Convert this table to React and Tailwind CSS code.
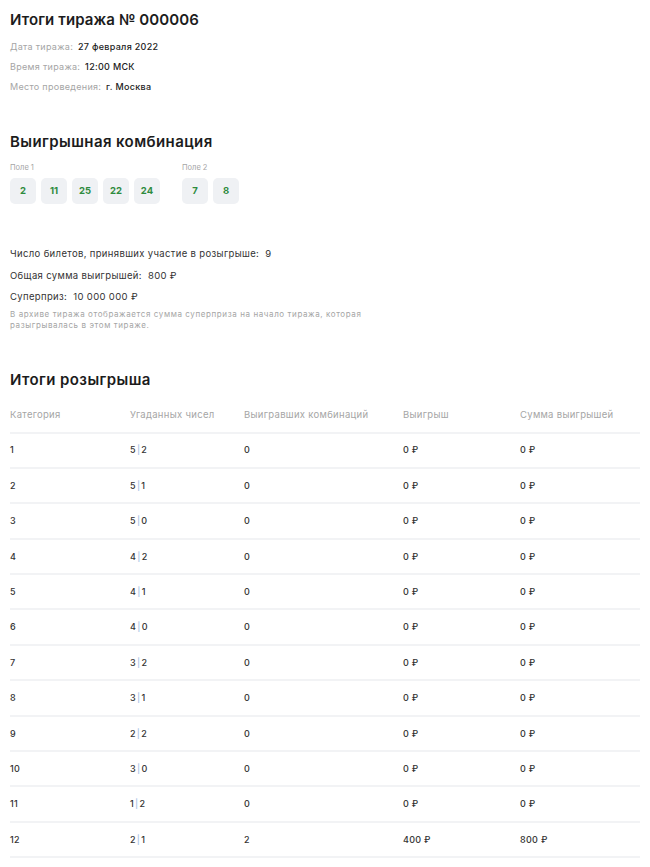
import React from "react";

const rows = [
  ["1", "5", "2", "0", "0 ₽", "0 ₽"],
  ["2", "5", "1", "0", "0 ₽", "0 ₽"],
  ["3", "5", "0", "0", "0 ₽", "0 ₽"],
  ["4", "4", "2", "0", "0 ₽", "0 ₽"],
  ["5", "4", "1", "0", "0 ₽", "0 ₽"],
  ["6", "4", "0", "0", "0 ₽", "0 ₽"],
  ["7", "3", "2", "0", "0 ₽", "0 ₽"],
  ["8", "3", "1", "0", "0 ₽", "0 ₽"],
  ["9", "2", "2", "0", "0 ₽", "0 ₽"],
  ["10", "3", "0", "0", "0 ₽", "0 ₽"],
  ["11", "1", "2", "0", "0 ₽", "0 ₽"],
  ["12", "2", "1", "2", "400 ₽", "800 ₽"],
];

function Chip({ n }) {
  return (
    <div className="w-[26px] h-[26px] rounded-[5px] bg-[#eff1f4] flex items-center justify-center text-[9.5px] font-bold text-[#2e8b3e]">
      {n}
    </div>
  );
}

export default function App() {
  return (
    <div
      className="w-[650px] bg-white text-[#222] px-[10px]"
      style={{ fontFamily: "Inter, 'Noto Sans', sans-serif" }}
    >
      <h1 className="pt-[11px] text-[15px] leading-[18px] font-semibold text-[#1c1c1c] tracking-[0.1px]">
        Итоги тиража № 000006
      </h1>
      <div className="mt-[8px] flex flex-col text-[9px] tracking-[0.3px] leading-[20px]">
        <div>
          <span className="text-[#a5a5a5]">Дата тиража:</span>{" "}
          <span className="text-[#222] font-medium ml-[2px]">27 февраля 2022</span>
        </div>
        <div>
          <span className="text-[#a5a5a5]">Время тиража:</span>{" "}
          <span className="text-[#222] font-medium ml-[2px]">12:00 МСК</span>
        </div>
        <div>
          <span className="text-[#a5a5a5]">Место проведения:</span>{" "}
          <span className="text-[#222] font-medium ml-[2px]">г. Москва</span>
        </div>
      </div>

      <h2 className="mt-[36px] text-[15px] leading-[18px] font-semibold tracking-[0.4px] text-[#1c1c1c]">
        Выигрышная комбинация
      </h2>
      <div className="mt-[12px] flex gap-[22px]">
        <div>
          <div className="text-[7.5px] leading-[10px] text-[#a5a5a5]">Поле 1</div>
          <div className="mt-[5px] flex gap-[5px]">
            {["2", "11", "25", "22", "24"].map((n) => (
              <Chip key={n} n={n} />
            ))}
          </div>
        </div>
        <div>
          <div className="text-[7.5px] leading-[10px] text-[#a5a5a5]">Поле 2</div>
          <div className="mt-[5px] flex gap-[5px]">
            {["7", "8"].map((n) => (
              <Chip key={n} n={n} />
            ))}
          </div>
        </div>
      </div>

      <div className="mt-[39px] flex flex-col text-[9.5px] tracking-[0.35px] leading-[21.5px] text-[#333]">
        <div>Число билетов, принявших участие в розыгрыше:&nbsp; 9</div>
        <div>Общая сумма выигрышей:&nbsp; 800 ₽</div>
        <div>Суперприз:&nbsp; 10 000 000 ₽</div>
      </div>
      <div className="mt-[1px] w-[368px] text-[8px] tracking-[0.6px] leading-[11px] text-[#a5a5a5]">
        В архиве тиража отображается сумма суперприза на начало тиража, которая разыгрывалась в этом тираже.
      </div>

      <h2 className="mt-[40px] text-[15px] leading-[18px] font-semibold tracking-[0.4px] text-[#1c1c1c]">
        Итоги розыгрыша
      </h2>
      <div className="mt-[20px] w-[630px]">
        <div className="h-[25px] flex items-start text-[9.5px] tracking-[0.3px] leading-[12px] text-[#a5a5a5] border-b-2 border-[#f2f3f5]">
          <div className="w-[120px]">Категория</div>
          <div className="w-[114px]">Угаданных чисел</div>
          <div className="w-[159px]">Выигравших комбинаций</div>
          <div className="w-[117px]">Выигрыш</div>
          <div className="flex-1">Сумма выигрышей</div>
        </div>
        {rows.map((r) => (
          <div
            key={r[0]}
            className="h-[35.4px] flex items-center text-[9px] tracking-[0.3px] font-medium text-[#333] border-b-2 border-[#f2f3f5]"
          >
            <div className="w-[120px]">{r[0]}</div>
            <div className="w-[114px]">
              {r[1]}
              <span className="text-[#a9c4e6] mx-[1px]">|</span>
              {r[2]}
            </div>
            <div className="w-[159px]">{r[3]}</div>
            <div className="w-[117px]">{r[4]}</div>
            <div className="flex-1">{r[5]}</div>
          </div>
        ))}
      </div>
      <div className="h-[9px]" />
    </div>
  );
}
